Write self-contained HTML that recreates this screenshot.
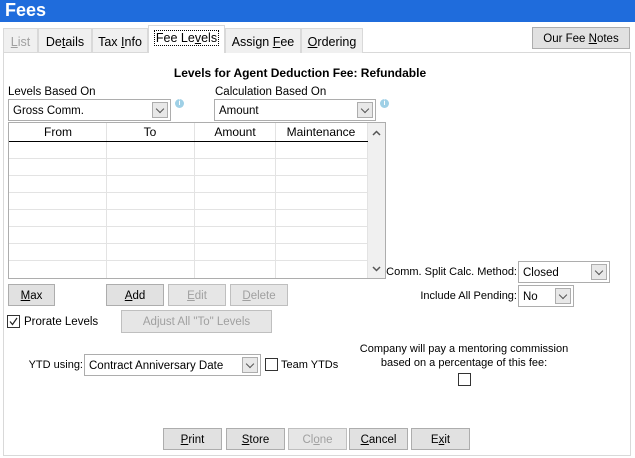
<!DOCTYPE html>
<html><head><style>
*{box-sizing:border-box;margin:0;padding:0}
body{width:635px;height:458px;background:#fff;font-family:"Liberation Sans",Arial,sans-serif;font-size:11.5px;color:#000;position:relative;overflow:hidden}
.a{position:absolute}
.title{left:0;top:0;width:635px;height:22px;background:#1f6cdc;color:#fff;font-weight:bold;font-size:18px;padding:0 0 0 5px}
.tab{top:28px;height:25px;background:#f0f0f0;border:1px solid #d9d9d9;border-bottom:none;text-align:center;padding-top:6px;font-size:12.5px}
.panel{left:3px;top:52px;width:628px;height:404px;border:1px solid #d9d9d9;background:#fff}
.btn{height:22px;background:#e1e1e1;border:1px solid #adadad;text-align:center;padding-top:5px;font-size:11.5px}
.dis{color:#a0a0a0;border-color:#bfbfbf;background:#e6e6e6}
.sel{height:22px;border:1px solid #adadad;background:#fff;padding:5px 0 0 4px;font-size:11.5px}
.dd{position:absolute;right:2px;top:2px;width:16px;height:16px;border:1px solid #adadad;background:#e8e8e8}
.dd:after{content:"";position:absolute;left:4px;top:3px;width:5px;height:5px;border-right:1px solid #555;border-bottom:1px solid #555;transform:rotate(45deg)}
.info{width:9px;height:9px;border-radius:50%;background:#9fd0e6;color:#fff;font-size:7px;text-align:center;line-height:9px;font-weight:bold}
.cb{width:13px;height:13px;border:1px solid #333;background:#fff}
.r{text-align:right}
u{text-decoration:underline}
</style></head><body>
<div class="a title">Fees</div>
<div class="a tab" style="left:3px;width:35px;color:#a0a0a0"><u>L</u>ist</div>
<div class="a tab" style="left:38px;width:54px">De<u>t</u>ails</div>
<div class="a tab" style="left:92px;width:56px">Tax <u>I</u>nfo</div>
<div class="a panel"></div>
<div class="a tab" style="left:148px;top:25px;width:77px;height:28px;background:#fff;padding-top:5px"><span style="border:1px dotted #000;padding:0 1px">Fee Le<u>v</u>els</span></div>
<div class="a tab" style="left:225px;width:76px">Assign <u>F</u>ee</div>
<div class="a tab" style="left:301px;width:62px"><u>O</u>rdering</div>
<div class="a btn" style="left:532px;top:27px;width:98px">Our Fee <u>N</u>otes</div>

<div class="a" style="left:0;width:600px;top:66px;text-align:center;font-weight:bold;font-size:12px">Levels for Agent Deduction Fee: Refundable</div>
<div class="a" style="left:8px;top:86px">Levels Based On</div>
<div class="a sel" style="left:8px;top:99px;width:163px">Gross Comm.<div class="dd"></div></div>
<div class="a info" style="left:175px;top:99px">i</div>
<div class="a" style="left:215px;top:86px">Calculation Based On</div>
<div class="a sel" style="left:214px;top:99px;width:162px">Amount<div class="dd"></div></div>
<div class="a info" style="left:380px;top:99px">i</div>

<div class="a" style="left:8px;top:122px;width:378px;height:157px;border:1px solid #adadad;background:#fff">
<svg width="376" height="155" style="position:absolute;left:0;top:0">
<g stroke="#e3e3e3" stroke-width="1">
<line x1="97.5" y1="0" x2="97.5" y2="155"/><line x1="185.5" y1="0" x2="185.5" y2="155"/><line x1="266.5" y1="0" x2="266.5" y2="155"/><line x1="358.5" y1="0" x2="358.5" y2="155"/>
<line x1="0" y1="35.5" x2="359" y2="35.5"/><line x1="0" y1="52.5" x2="359" y2="52.5"/><line x1="0" y1="69.5" x2="359" y2="69.5"/><line x1="0" y1="86.5" x2="359" y2="86.5"/><line x1="0" y1="103.5" x2="359" y2="103.5"/><line x1="0" y1="120.5" x2="359" y2="120.5"/><line x1="0" y1="137.5" x2="359" y2="137.5"/>
</g>
<line x1="0" y1="18.5" x2="359" y2="18.5" stroke="#000"/>
<rect x="359" y="0" width="17" height="155" fill="#f0f0f0"/>
<path d="M364 12 L367.5 8.5 L371 12" stroke="#555" stroke-width="1.5" fill="none"/>
<path d="M364 144 L367.5 147.5 L371 144" stroke="#555" stroke-width="1.5" fill="none"/>
<g font-family="Liberation Sans" font-size="12" text-anchor="middle"><text x="49" y="13">From</text><text x="141" y="13">To</text><text x="226" y="13">Amount</text><text x="312" y="13">Maintenance</text></g>
</svg></div>

<div class="a r" style="left:380px;width:137px;top:266px;font-size:11px">Comm. Split Calc. Method:</div>
<div class="a sel" style="left:518px;top:261px;width:92px">Closed<div class="dd"></div></div>
<div class="a r" style="left:380px;width:137px;top:290px;font-size:11px">Include All Pending:</div>
<div class="a sel" style="left:518px;top:285px;width:56px">No<div class="dd"></div></div>

<div class="a btn" style="left:8px;top:284px;width:47px"><u>M</u>ax</div>
<div class="a btn" style="left:106px;top:284px;width:58px"><u>A</u>dd</div>
<div class="a btn dis" style="left:168px;top:284px;width:58px"><u>E</u>dit</div>
<div class="a btn dis" style="left:230px;top:284px;width:58px"><u>D</u>elete</div>
<div class="a cb" style="left:7px;top:315px"><svg width="11" height="11" style="position:absolute;left:0;top:0"><path d="M2 5.5 L4.5 8.5 L9 2" stroke="#222" stroke-width="1.2" fill="none"/></svg></div>
<div class="a" style="left:24px;top:316px">Prorate Levels</div>
<div class="a btn dis" style="left:121px;top:310px;width:151px;height:23px">Adjust All "To" Levels</div>

<div class="a r" style="left:10px;width:73px;top:359px;font-size:11px">YTD using:</div>
<div class="a sel" style="left:84px;top:354px;width:177px">Contract Anniversary Date<div class="dd"></div></div>
<div class="a cb" style="left:265px;top:358px"></div>
<div class="a" style="left:281px;top:359px;font-size:11px">Team YTDs</div>
<div class="a" style="left:340px;top:342px;width:248px;text-align:center;line-height:14px;font-size:11px">Company will pay a mentoring commission<br>based on a percentage of this fee:</div>
<div class="a cb" style="left:458px;top:373px"></div>

<div class="a btn" style="left:163px;top:428px;width:59px"><u>P</u>rint</div>
<div class="a btn" style="left:226px;top:428px;width:59px"><u>S</u>tore</div>
<div class="a btn dis" style="left:288px;top:428px;width:59px">Cl<u>o</u>ne</div>
<div class="a btn" style="left:349px;top:428px;width:59px"><u>C</u>ancel</div>
<div class="a btn" style="left:411px;top:428px;width:59px">E<u>x</u>it</div>
</body></html>
